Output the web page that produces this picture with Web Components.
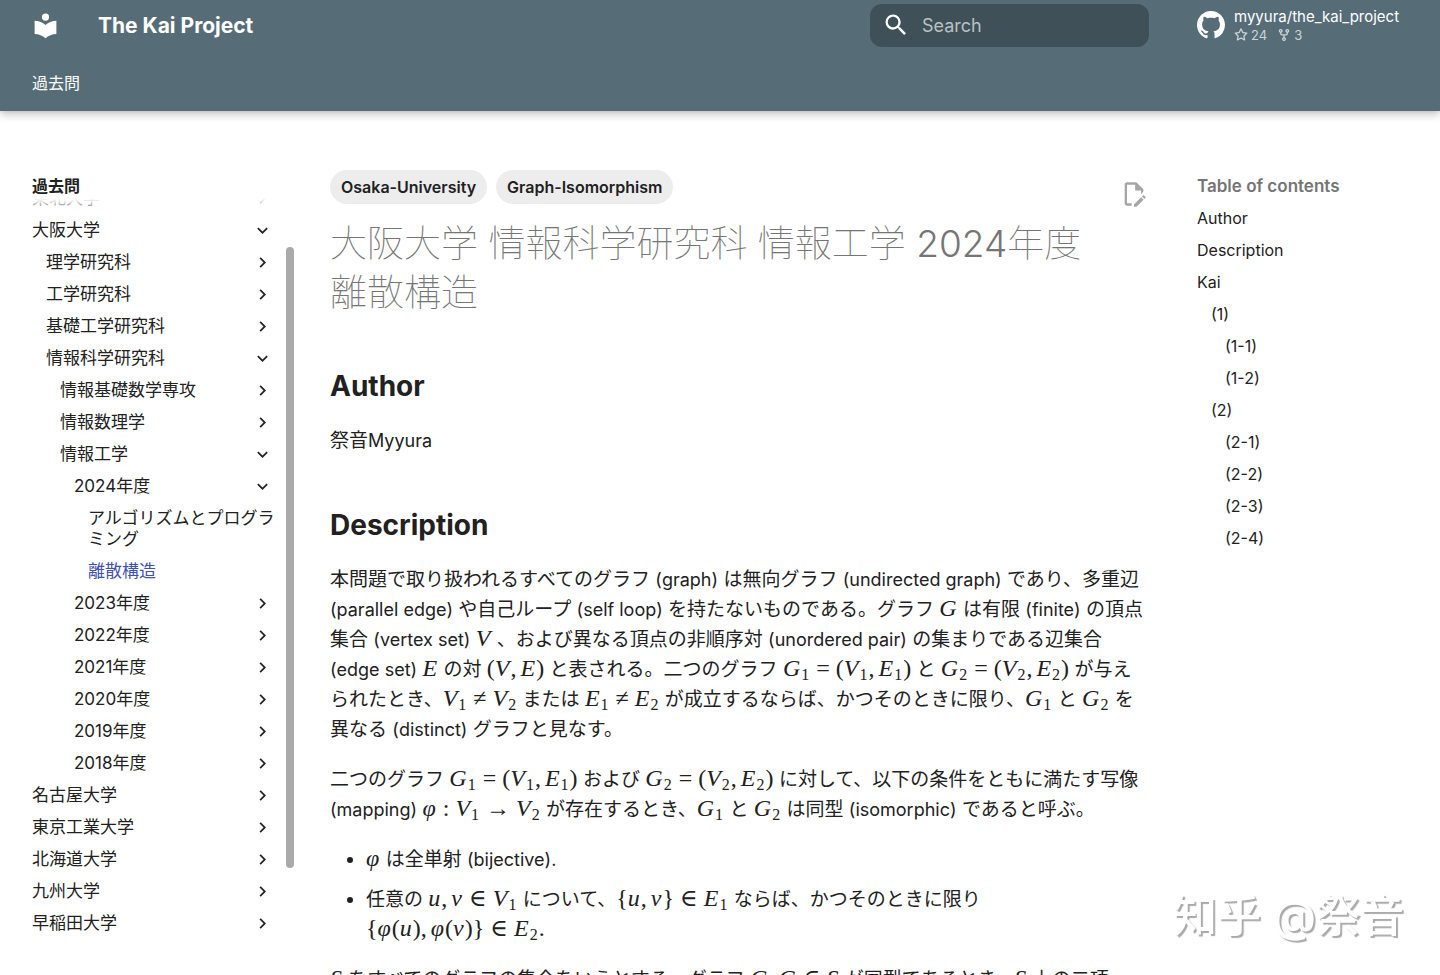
<!DOCTYPE html>
<html lang="ja">
<head>
<meta charset="utf-8">
<title>The Kai Project</title>
<style>
    body {
        margin: 0;
        height: 100vh;
        overflow: hidden;
        background: #fff;
        color: #212121;
        font-family: Inter, "Noto Sans CJK JP", sans-serif;
        font-size: 16px;
    }
</style>
</head>
<body>
<kai-page></kai-page>

<script>
const ICONS = {
    book: ['0 0 24 24', 'M12 8a3 3 0 0 0 3-3 3 3 0 0 0-3-3 3 3 0 0 0-3 3 3 3 0 0 0 3 3m0 3.54C9.64 9.35 6.5 8 3 8v11c3.5 0 6.64 1.35 9 3.54 2.36-2.19 5.5-3.54 9-3.54V8c-3.5 0-6.64 1.35-9 3.54Z'],
    search: ['0 0 24 24', 'M9.5 3A6.5 6.5 0 0 1 16 9.5c0 1.61-.59 3.09-1.56 4.23l.27.27h.79l5 5-1.5 1.5-5-5v-.79l-.27-.27A6.516 6.516 0 0 1 9.5 16 6.5 6.5 0 0 1 3 9.5 6.5 6.5 0 0 1 9.5 3m0 2C7 5 5 7 5 9.5S7 14 9.5 14 14 12 14 9.5 12 5 9.5 5Z'],
    edit: ['0 0 24 24', 'M10 20H6V4h7v5h5v3.1l2-2V8l-6-6H6c-1.1 0-2 .9-2 2v16c0 1.1.9 2 2 2h4v-2m10.2-7c.1 0 .3.1.4.2l1.3 1.3c.2.2.2.6 0 .8l-1 1-2.1-2.1 1-1c.1-.1.2-.2.4-.2m0 3.9L14.1 23H12v-2.1l6.1-6.1 2.1 2.1Z'],
    chevron: ['0 0 24 24', 'M8.59 16.58 13.17 12 8.59 7.41 10 6l6 6-6 6-1.41-1.42Z'],
    github: ['0 0 16 16', 'M8 0C3.58 0 0 3.58 0 8c0 3.54 2.29 6.53 5.47 7.59.4.07.55-.17.55-.38 0-.19-.01-.82-.01-1.49-2.01.37-2.53-.49-2.69-.94-.09-.23-.48-.94-.82-1.13-.28-.15-.68-.52-.01-.53.63-.01 1.08.58 1.23.82.72 1.21 1.87.87 2.33.66.07-.52.28-.87.51-1.07-1.78-.2-3.64-.89-3.64-3.95 0-.87.31-1.59.82-2.15-.08-.2-.36-1.02.08-2.12 0 0 .67-.21 2.2.82.64-.18 1.32-.27 2-.27s1.36.09 2 .27c1.53-1.04 2.2-.82 2.2-.82.44 1.1.16 1.92.08 2.12.51.56.82 1.27.82 2.15 0 3.07-1.87 3.75-3.65 3.95.29.25.54.73.54 1.48 0 1.07-.01 1.93-.01 2.2 0 .21.15.46.55.38A8.01 8.01 0 0 0 16 8c0-4.42-3.58-8-8-8Z'],
    star: ['0 0 16 16', 'M8 .25a.75.75 0 0 1 .673.418l1.882 3.815 4.21.612a.75.75 0 0 1 .416 1.279l-3.046 2.97.719 4.192a.751.751 0 0 1-1.088.791L8 12.347l-3.766 1.98a.75.75 0 0 1-1.088-.79l.72-4.194L.818 6.374a.75.75 0 0 1 .416-1.28l4.21-.611L7.327.668A.75.75 0 0 1 8 .25Zm0 2.445L6.615 5.5a.75.75 0 0 1-.564.41l-3.097.45 2.24 2.184a.75.75 0 0 1 .216.664l-.528 3.084 2.769-1.456a.75.75 0 0 1 .698 0l2.77 1.456-.53-3.084a.75.75 0 0 1 .216-.664l2.24-2.183-3.096-.45a.75.75 0 0 1-.564-.41L8 2.694Z'],
    fork: ['0 0 16 16', 'M5 5.372v.878c0 .414.336.75.75.75h4.5a.75.75 0 0 0 .75-.75v-.878a2.25 2.25 0 1 1 1.5 0v.878a2.25 2.25 0 0 1-2.25 2.25h-1.5v2.128a2.251 2.251 0 1 1-1.5 0V8.5h-1.5A2.25 2.25 0 0 1 3.5 6.25v-.878a2.25 2.25 0 1 1 1.5 0ZM5 3.25a.75.75 0 1 0-1.5 0 .75.75 0 0 0 1.5 0Zm6.75.75a.75.75 0 1 0 0-1.5.75.75 0 0 0 0 1.5Zm-3 8.75a.75.75 0 1 0-1.5 0 .75.75 0 0 0 1.5 0Z']
};

class KaiIcon extends HTMLElement {
    connectedCallback() {
        const [box, path] = ICONS[this.getAttribute('name')];
        const size = this.getAttribute('size') || 24;
        this.attachShadow({ mode: 'open' }).innerHTML = `
            <style>
                :host { display: block; flex: none; width: ${size}px; height: ${size}px; }
                svg { display: block; width: 100%; height: 100%; fill: currentColor; }
            </style>
            <svg viewBox="${box}" aria-hidden="true"><path d="${path}"/></svg>
        `;
    }
}
customElements.define('kai-icon', KaiIcon);

// Inline formula: letters are italic, _n is a subscript, relations get space on both sides
class KaiMath extends HTMLElement {
    connectedCallback() {
        const html = this.getAttribute('tex').replace(/\s+/g, '').replace(
            /_(\d)|([A-Za-zφ])|([=≠∈→:])|(,)/g,
            (m, sub, letter, rel, comma) => {
                if (sub) return `<sub>${sub}</sub>`;
                if (letter) return `<i>${letter}</i>`;
                if (rel) return `<span class="rel">${rel}</span>`;
                return '<span class="comma">,</span>';
            }
        );
        this.attachShadow({ mode: 'open' }).innerHTML = `
            <style>
                :host {
                    display: inline-block;
                    font-family: "Liberation Serif", "DejaVu Serif", serif;
                    font-size: 24px;
                    line-height: 24px;
                    white-space: nowrap;
                }
                i { padding-right: 1px; }
                sub { font-size: 16px; line-height: 0; vertical-align: -4px; padding-right: 1px; }
                .rel { margin: 0 6px; }
                .comma { margin-right: 4px; }
            </style>${html}`;
    }
}
customElements.define('kai-math', KaiMath);

class KaiHeader extends HTMLElement {
    connectedCallback() {
        this.attachShadow({ mode: 'open' }).innerHTML = `
            <style>
                :host {
                    display: block;
                    position: relative;
                    z-index: 2;
                    background: #566d78;
                    color: #fff;
                    box-shadow: 0 0 4px rgba(0, 0, 0, 0.1), 0 4px 8px rgba(0, 0, 0, 0.2);
                }
                a { color: inherit; text-decoration: none; }
                .bar { display: flex; align-items: center; height: 50px; padding: 0 32px 0 31px; }
                .title { flex: 1; margin-left: 38px; font-size: 21px; font-weight: 700; }
                .search {
                    display: flex;
                    align-items: center;
                    gap: 12px;
                    box-sizing: border-box;
                    width: 279px;
                    height: 43px;
                    padding: 0 12px;
                    border-radius: 12px;
                    background: #3f5058;
                }
                input {
                    flex: 1;
                    min-width: 0;
                    padding: 0;
                    border: 0;
                    outline: 0;
                    background: none;
                    color: #fff;
                    font: 18px Inter, "Noto Sans CJK JP", sans-serif;
                }
                input::placeholder { color: #b9c1c5; opacity: 1; }
                .repo { display: flex; align-items: center; gap: 9px; width: 211px; margin-left: 48px; }
                .repo-name { font-size: 15px; line-height: 20px; }
                .facts { display: flex; gap: 10px; font-size: 13px; line-height: 17px; color: #cbd3d7; }
                .facts span { display: flex; align-items: center; gap: 3px; }
                .tabs { display: flex; height: 61px; box-sizing: border-box; padding: 21px 32px 0; font-size: 16px; line-height: 24px; }
            </style>
            <header>
                <div class="bar">
                    <a href="#" aria-label="The Kai Project"><kai-icon name="book" size="29"></kai-icon></a>
                    <span class="title">The Kai Project</span>
                    <label class="search">
                        <kai-icon name="search" size="28"></kai-icon>
                        <input type="text" placeholder="Search" aria-label="Search">
                    </label>
                    <a class="repo" href="#">
                        <kai-icon name="github" size="28"></kai-icon>
                        <div>
                            <div class="repo-name">myyura/the_kai_project</div>
                            <div class="facts">
                                <span><kai-icon name="star" size="14"></kai-icon>24</span>
                                <span><kai-icon name="fork" size="14"></kai-icon>3</span>
                            </div>
                        </div>
                    </a>
                </div>
                <nav class="tabs"><a href="#">過去問</a></nav>
            </header>
        `;
    }
}
customElements.define('kai-header', KaiHeader);

class KaiNav extends HTMLElement {
    // [level, label, state]
    static items = [
        [0, '東北大学', 'closed'],
        [0, '大阪大学', 'open'],
        [1, '理学研究科', 'closed'],
        [1, '工学研究科', 'closed'],
        [1, '基礎工学研究科', 'closed'],
        [1, '情報科学研究科', 'open'],
        [2, '情報基礎数学専攻', 'closed'],
        [2, '情報数理学', 'closed'],
        [2, '情報工学', 'open'],
        [3, '2024年度', 'open'],
        [4, 'アルゴリズムとプログラミング', 'page'],
        [4, '離散構造', 'active'],
        [3, '2023年度', 'closed'],
        [3, '2022年度', 'closed'],
        [3, '2021年度', 'closed'],
        [3, '2020年度', 'closed'],
        [3, '2019年度', 'closed'],
        [3, '2018年度', 'closed'],
        [0, '名古屋大学', 'closed'],
        [0, '東京工業大学', 'closed'],
        [0, '北海道大学', 'closed'],
        [0, '九州大学', 'closed'],
        [0, '早稲田大学', 'closed']
    ];

    connectedCallback() {
        const rows = KaiNav.items.map(([level, label, state]) => {
            const folder = state === 'open' || state === 'closed';
            return `
                <li class="level-${level} ${state}">
                    <a href="#">${label}</a>
                    ${folder ? '<kai-icon name="chevron" size="21"></kai-icon>' : ''}
                </li>`;
        }).join('');
        this.attachShadow({ mode: 'open' }).innerHTML = `
            <style>
                :host { display: flex; gap: 8px; }
                nav { flex: 1; min-width: 0; }
                h2 {
                    position: relative;
                    z-index: 1;
                    margin: 0;
                    background: #fff;
                    box-shadow: 0 0 8px 8px #fff;
                    font-size: 16px;
                    font-weight: 700;
                    line-height: 24px;
                }
                ul { list-style: none; margin: -10px 0 0; padding: 0; }
                li { display: flex; align-items: flex-start; margin-bottom: 11px; line-height: 21px; font-size: 17px; }
                li a { flex: 1; color: inherit; text-decoration: none; }
                .open, .closed { padding-right: 5px; }
                .level-1 { padding-left: 14px; }
                .level-2 { padding-left: 28px; }
                .level-3 { padding-left: 42px; }
                .level-4 { padding-left: 56px; }
                .open kai-icon { transform: rotate(90deg); }
                .active { color: #4051b5; }
                .thumb { width: 8px; height: 621px; margin-top: 73px; border-radius: 4px; background: #aaa; }
            </style>
            <nav aria-label="過去問">
                <h2>過去問</h2>
                <ul>${rows}</ul>
            </nav>
            <div class="thumb"></div>
        `;
    }
}
customElements.define('kai-nav', KaiNav);

class KaiTag extends HTMLElement {
    connectedCallback() {
        this.attachShadow({ mode: 'open' }).innerHTML = `
            <style>
                :host {
                    display: block;
                    padding: 0 11px;
                    border-radius: 17px;
                    background: #ededed;
                    font-size: 16px;
                    font-weight: 600;
                    line-height: 34px;
                }
            </style>
            <slot></slot>
        `;
    }
}
customElements.define('kai-tag', KaiTag);

class KaiArticle extends HTMLElement {
    connectedCallback() {
        this.attachShadow({ mode: 'open' }).innerHTML = `
            <style>
                :host { display: block; line-height: 30px; }
                .top { display: flex; justify-content: space-between; height: 49px; }
                .tags { display: flex; gap: 9px; align-items: flex-start; }
                .edit { color: #a6a6a6; padding-top: 10px; }
                h1 { margin: 0; color: #757575; font-size: 37px; font-weight: 100; line-height: 49px; }
                h1 span { font-weight: 300; }
                h2 { margin: 49px 0 20px; font-size: 28px; font-weight: 700; line-height: 40px; }
                p { margin: 0 0 20px; }
                p, li { font-size: 19px; }
                /* Inter runs large next to the Japanese face */
                [lang="en"] { font-size: 18px; }
                ul { display: flex; flex-direction: column; gap: 10px; margin: 0 0 20px; padding-left: 36px; }
            </style>
            <article>
                <div class="top">
                    <div class="tags">
                        <kai-tag>Osaka-University</kai-tag>
                        <kai-tag>Graph-Isomorphism</kai-tag>
                    </div>
                    <a class="edit" href="#" aria-label="Edit this page"><kai-icon name="edit" size="28"></kai-icon></a>
                </div>
                <h1>大阪大学 情報科学研究科 情報工学 <span>2024</span>年度<br>離散構造</h1>
                <h2>Author</h2>
                <p>祭音<span lang="en">Myyura</span></p>
                <h2>Description</h2>
                <p>
                    本問題で取り扱われるすべてのグラフ <span lang="en">(graph)</span> は無向グラフ <span lang="en">(undirected graph)</span> であり、多重辺<br>
                    <span lang="en">(parallel edge)</span> や自己ループ <span lang="en">(self loop)</span> を持たないものである。グラフ <kai-math tex="G"></kai-math> は有限 <span lang="en">(finite)</span> の頂点<br>
                    集合 <span lang="en">(vertex set)</span> <kai-math tex="V"></kai-math> 、および異なる頂点の非順序対 <span lang="en">(unordered pair)</span> の集まりである辺集合<br>
                    <span lang="en">(edge set)</span> <kai-math tex="E"></kai-math> の対 <kai-math tex="(V, E)"></kai-math> と表される。二つのグラフ <kai-math tex="G_1 = (V_1, E_1)"></kai-math> と <kai-math tex="G_2 = (V_2, E_2)"></kai-math> が与え<br>
                    られたとき、<kai-math tex="V_1 ≠ V_2"></kai-math> または <kai-math tex="E_1 ≠ E_2"></kai-math> が成立するならば、かつそのときに限り、<kai-math tex="G_1"></kai-math> と <kai-math tex="G_2"></kai-math> を<br>
                    異なる <span lang="en">(distinct)</span> グラフと見なす。
                </p>
                <p>
                    二つのグラフ <kai-math tex="G_1 = (V_1, E_1)"></kai-math> および <kai-math tex="G_2 = (V_2, E_2)"></kai-math> に対して、以下の条件をともに満たす写像<br>
                    <span lang="en">(mapping)</span> <kai-math tex="φ : V_1 → V_2"></kai-math> が存在するとき、<kai-math tex="G_1"></kai-math> と <kai-math tex="G_2"></kai-math> は同型 <span lang="en">(isomorphic)</span> であると呼ぶ。
                </p>
                <ul>
                    <li><kai-math tex="φ"></kai-math> は全単射 <span lang="en">(bijective).</span></li>
                    <li>
                        任意の <kai-math tex="u, v ∈ V_1"></kai-math> について、<kai-math tex="{u, v} ∈ E_1"></kai-math> ならば、かつそのときに限り<br>
                        <kai-math tex="{φ(u), φ(v)} ∈ E_2."></kai-math>
                    </li>
                </ul>
                <p><kai-math tex="S"></kai-math> をすべてのグラフの集合をいうとする。グラフ <kai-math tex="G, G ∈ S"></kai-math> が同型であるとき、<kai-math tex="S"></kai-math> 上の二項</p>
            </article>
        `;
    }
}
customElements.define('kai-article', KaiArticle);

class KaiToc extends HTMLElement {
    connectedCallback() {
        const items = [
            [0, 'Author'], [0, 'Description'], [0, 'Kai'],
            [1, '(1)'], [2, '(1-1)'], [2, '(1-2)'],
            [1, '(2)'], [2, '(2-1)'], [2, '(2-2)'], [2, '(2-3)'], [2, '(2-4)']
        ];
        this.attachShadow({ mode: 'open' }).innerHTML = `
            <style>
                :host { display: block; font-size: 16px; line-height: 24px; }
                h2 { margin: 0; color: #757575; font-size: 17px; font-weight: 600; }
                ul { list-style: none; margin: 0; padding: 0; }
                li { margin-top: 8px; }
                a { color: inherit; text-decoration: none; }
                .level-1 { padding-left: 14px; }
                .level-2 { padding-left: 28px; }
            </style>
            <nav aria-label="Table of contents">
                <h2>Table of contents</h2>
                <ul>${items.map(([level, label]) => `<li class="level-${level}"><a href="#">${label}</a></li>`).join('')}</ul>
            </nav>
        `;
    }
}
customElements.define('kai-toc', KaiToc);

class KaiPage extends HTMLElement {
    connectedCallback() {
        this.attachShadow({ mode: 'open' }).innerHTML = `
            <style>
                :host { display: block; }
                main { display: grid; grid-template-columns: 262px minmax(0, 1fr) 211px; padding: 59px 32px 0; }
                kai-nav, kai-toc { margin-top: 4px; }
                kai-article { margin: 0 49px 0 36px; }
                .mark {
                    position: fixed;
                    right: 36px;
                    bottom: 29px;
                    color: #fff;
                    font-size: 44px;
                    font-weight: 500;
                    line-height: 60px;
                    text-shadow: 2px 2px 1px #aaa;
                }
            </style>
            <kai-header></kai-header>
            <main>
                <kai-nav></kai-nav>
                <kai-article></kai-article>
                <kai-toc></kai-toc>
            </main>
            <div class="mark">知乎 @祭音</div>
        `;
    }
}
customElements.define('kai-page', KaiPage);
</script>
</body>
</html>
